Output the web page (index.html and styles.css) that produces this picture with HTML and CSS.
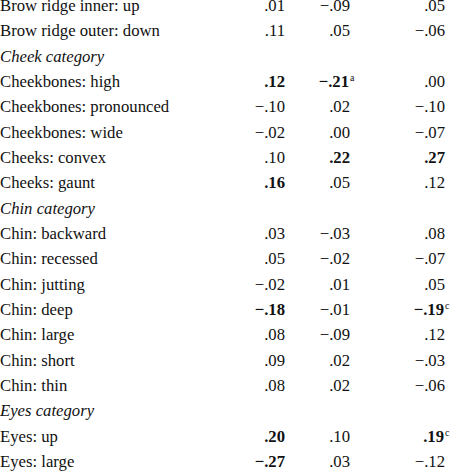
FILE: index.html
```html
<!DOCTYPE html>
<html>
<head>
<meta charset="utf-8">
<link rel="stylesheet" href="styles.css">
</head>
<body>
<div class="table">
  <div class="row"><div class="cell label">Brow ridge inner: up</div><div class="cell num">.01</div><div class="cell num">−.09</div><div class="cell num">.05</div></div>
  <div class="row"><div class="cell label">Brow ridge outer: down</div><div class="cell num">.11</div><div class="cell num">.05</div><div class="cell num">−.06</div></div>
  <div class="row"><div class="cell label cat">Cheek category</div></div>
  <div class="row"><div class="cell label">Cheekbones: high</div><div class="cell num b">.12</div><div class="cell num b">−.21<sup class="note">a</sup></div><div class="cell num">.00</div></div>
  <div class="row"><div class="cell label">Cheekbones: pronounced</div><div class="cell num">−.10</div><div class="cell num">.02</div><div class="cell num">−.10</div></div>
  <div class="row"><div class="cell label">Cheekbones: wide</div><div class="cell num">−.02</div><div class="cell num">.00</div><div class="cell num">−.07</div></div>
  <div class="row"><div class="cell label">Cheeks: convex</div><div class="cell num">.10</div><div class="cell num b">.22</div><div class="cell num b">.27</div></div>
  <div class="row"><div class="cell label">Cheeks: gaunt</div><div class="cell num b">.16</div><div class="cell num">.05</div><div class="cell num">.12</div></div>
  <div class="row"><div class="cell label cat">Chin category</div></div>
  <div class="row"><div class="cell label">Chin: backward</div><div class="cell num">.03</div><div class="cell num">−.03</div><div class="cell num">.08</div></div>
  <div class="row"><div class="cell label">Chin: recessed</div><div class="cell num">.05</div><div class="cell num">−.02</div><div class="cell num">−.07</div></div>
  <div class="row"><div class="cell label">Chin: jutting</div><div class="cell num">−.02</div><div class="cell num">.01</div><div class="cell num">.05</div></div>
  <div class="row"><div class="cell label">Chin: deep</div><div class="cell num b">−.18</div><div class="cell num">−.01</div><div class="cell num b">−.19<sup class="note">c</sup></div></div>
  <div class="row"><div class="cell label">Chin: large</div><div class="cell num">.08</div><div class="cell num">−.09</div><div class="cell num">.12</div></div>
  <div class="row"><div class="cell label">Chin: short</div><div class="cell num">.09</div><div class="cell num">.02</div><div class="cell num">−.03</div></div>
  <div class="row"><div class="cell label">Chin: thin</div><div class="cell num">.08</div><div class="cell num">.02</div><div class="cell num">−.06</div></div>
  <div class="row"><div class="cell label cat">Eyes category</div></div>
  <div class="row"><div class="cell label">Eyes: up</div><div class="cell num b">.20</div><div class="cell num">.10</div><div class="cell num b">.19<sup class="note">c</sup></div></div>
  <div class="row"><div class="cell label">Eyes: large</div><div class="cell num b">−.27</div><div class="cell num">.03</div><div class="cell num">−.12</div></div>
</div>
</body>
</html>
```

FILE: styles.css
```css
body {
  margin: 0;
  padding: 0;
  background: #ffffff;
  font-family: "Liberation Serif", "Times New Roman", serif;
  font-size: 16.7px;
  color: #111111;
  overflow: hidden;
}

.table {
  display: flex;
  flex-direction: column;
  margin-top: -7px;
  width: 474px;
}

.row {
  display: grid;
  grid-template-columns: 230px 55px 65px 95px;
  height: 25.33px;
  line-height: 25.33px;
  white-space: nowrap;
}

.label {
  text-align: left;
}

.cat {
  font-style: italic;
}

.num {
  text-align: right;
}

.b {
  font-weight: bold;
}

.note {
  display: inline-block;
  width: 0;
  font-size: 10px;
  font-weight: normal;
  line-height: 0;
  vertical-align: 6px;
  padding-left: 1px;
}
```
